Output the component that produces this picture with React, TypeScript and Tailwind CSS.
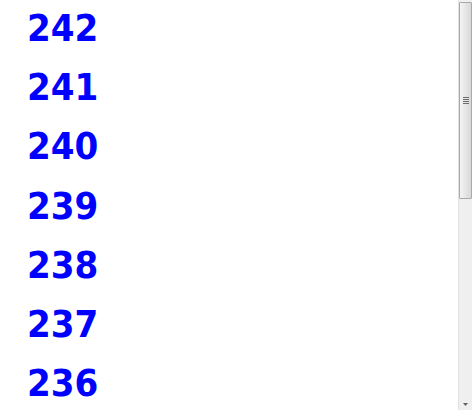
export default function App() {
  const items = [242, 241, 240, 239, 238, 237, 236]

  return (
    <div className="flex h-[412px] w-[474px] bg-white">
      {/* List */}
      <div className="flex-1 overflow-hidden pl-[27px]">
        {items.map((n) => (
          <div
            key={n}
            className="h-[59.2px] text-[38px] leading-[57px] font-bold text-[#0000ff] [font-family:'DejaVu_Sans_Condensed','DejaVu_Sans',sans-serif]"
          >
            {n}
          </div>
        ))}
      </div>

      {/* Scrollbar */}
      <div className="flex w-[16px] flex-col pr-[2px] pb-[2px]">
        <div className="flex flex-1 flex-col border-l border-[#e2e2e2] bg-[#efefef]">
          <div className="mt-[2px] flex h-[197px] items-center justify-center rounded-[1px] border border-[#a9a9a9] bg-gradient-to-r from-[#f4f4f4] via-[#e6e6e6] to-[#d8d8d8]">
            <div className="flex flex-col gap-[1px]">
              <div className="h-[1px] w-[6px] bg-[#6d6d6d]" />
              <div className="h-[1px] w-[6px] bg-[#6d6d6d]" />
              <div className="h-[1px] w-[6px] bg-[#6d6d6d]" />
              <div className="h-[1px] w-[6px] bg-[#6d6d6d]" />
            </div>
          </div>
          <div className="flex-1" />
          <div className="flex h-[12px] items-center justify-center">
            <svg width="5" height="3" viewBox="0 0 5 3">
              <path d="M0 0h5L2.5 3z" fill="#606060" />
            </svg>
          </div>
        </div>
      </div>
    </div>
  )
}
